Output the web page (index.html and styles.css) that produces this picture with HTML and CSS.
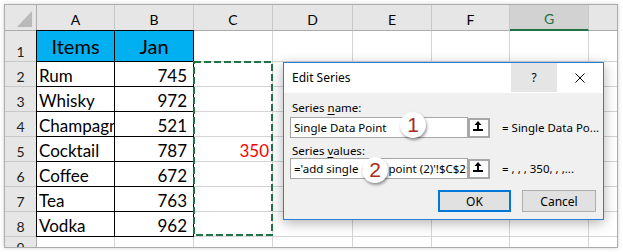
FILE: index.html
```html
<!DOCTYPE html>
<html lang="en">
<head>
    <meta charset="UTF-8">
    <title>Edit Series</title>
    <link rel="stylesheet" href="styles.css">
</head>
<body>
<div class="screen">
    <div class="frame">
        <div class="sheet">
            <!-- column headers -->
            <div class="hd corner"><svg width="31" height="25"><polygon points="27,6 27,22 12,22" fill="#b9b9b9"/></svg></div>
            <div class="hd col">A</div>
            <div class="hd col">B</div>
            <div class="hd col">C</div>
            <div class="hd col">D</div>
            <div class="hd col">E</div>
            <div class="hd col">F</div>
            <div class="hd col sel">G</div>
            <div class="hd col"></div>

            <div class="rn">1</div>
            <div class="top a">Items</div>
            <div class="top">Jan</div>
            <div></div><div></div><div></div><div></div><div></div><div></div>

            <div class="rn">2</div>
            <div class="b a">Rum</div>
            <div class="b n">745</div>
            <div></div><div></div><div></div><div></div><div></div><div></div>

            <div class="rn">3</div>
            <div class="b a">Whisky</div>
            <div class="b n">972</div>
            <div></div><div></div><div></div><div></div><div></div><div></div>

            <div class="rn">4</div>
            <div class="b a">Champagne</div>
            <div class="b n">521</div>
            <div></div><div></div><div></div><div></div><div></div><div></div>

            <div class="rn">5</div>
            <div class="b a">Cocktail</div>
            <div class="b n">787</div>
            <div class="red">350</div>
            <div></div><div></div><div></div><div></div><div></div>

            <div class="rn">6</div>
            <div class="b a">Coffee</div>
            <div class="b n">672</div>
            <div></div><div></div><div></div><div></div><div></div><div></div>

            <div class="rn">7</div>
            <div class="b a">Tea</div>
            <div class="b n">763</div>
            <div></div><div></div><div></div><div></div><div></div><div></div>

            <div class="rn">8</div>
            <div class="b a">Vodka</div>
            <div class="b n">962</div>
            <div></div><div></div><div></div><div></div><div></div><div></div>

            <div class="rn last">9</div>
            <div></div><div></div><div></div><div></div><div></div><div></div><div></div><div></div>
        </div>
    </div>

    <svg class="marquee" width="84" height="180"><rect x="2" y="2" width="78" height="173" fill="none" stroke="#217346" stroke-width="2" stroke-dasharray="7 3"/></svg>

    <div class="dialog">
        <div class="titlebar">
            <span class="title">Edit Series</span>
            <span class="tb-btn help">?</span>
            <span class="tb-btn"><svg width="10" height="10"><path d="M0.5 0.5 L9.5 9.5 M9.5 0.5 L0.5 9.5" stroke="#000" stroke-width="1"/></svg></span>
        </div>
        <div class="dlg-body">
            <div class="lbl">Series <u>n</u>ame:</div>
            <div class="field-row">
                <div class="field">Single Data Point</div>
                <div class="collapse"><svg width="18" height="16"><polygon points="8,1 4.5,5 11.5,5" fill="#000"/><rect x="7" y="5" width="2" height="4" fill="#000"/><rect x="3" y="9" width="10" height="2" fill="#000"/></svg></div>
                <div class="preview">= Single Data Po...</div>
            </div>
            <div class="lbl second">Series <u>v</u>alues:</div>
            <div class="field-row">
                <div class="field">='add single data point (2)'!$C$2:$C$8</div>
                <div class="collapse"><svg width="18" height="16"><polygon points="8,1 4.5,5 11.5,5" fill="#000"/><rect x="7" y="5" width="2" height="4" fill="#000"/><rect x="3" y="9" width="10" height="2" fill="#000"/></svg></div>
                <div class="preview">= , , , 350, , ,...</div>
            </div>
            <div class="btn-row">
                <div class="btn ok">OK</div>
                <div class="btn">Cancel</div>
            </div>
        </div>
        <span class="marker m1">1</span>
        <span class="marker m2">2</span>
    </div>
</div>
</body>
</html>
```

FILE: styles.css
```css
body {
    margin: 0;
    background: #fff;
}
.screen {
    position: relative;
    width: 623px;
    height: 252px;
    overflow: hidden;
}
.frame {
    margin: 4px;
    width: 612px;
    height: 242px;
    border: 1px solid #acacac;
    overflow: hidden;
    box-shadow: 0 0 4px rgba(0, 0, 0, 0.18);
}
.sheet {
    display: grid;
    grid-template-columns: 32px 78px 79px 79px 80px 79px 78px 79px 28px;
    grid-template-rows: 26px 31px repeat(7, 25px) 10px;
    font-family: Lato, "Open Sans", sans-serif;
}
.sheet > div {
    box-sizing: border-box;
    display: flex;
    align-items: flex-end;
    white-space: nowrap;
    overflow: hidden;
    border-right: 1px solid #d4d4d4;
    border-bottom: 1px solid #d4d4d4;
    padding: 0 2px 2px 2px;
    font-size: 17px;
    line-height: 1;
    color: #000;
}
.sheet > div:nth-child(9n) {
    border-right: none;
}
.sheet > div:nth-child(n+82) {
    border-bottom: none;
}
.hd {
    background: #e6e6e6;
    justify-content: center;
    color: #222;
}
.sheet > .hd {
    border-right-color: #c8c8c8;
    border-bottom-color: #ababab;
    font-size: 14px;
    padding-bottom: 3px;
}
.sheet > .corner {
    display: block;
    padding: 0;
    border-right-color: #ababab;
}
.sheet > .sel {
    background: #d2d2d2;
    color: #217346;
    border-bottom: 2px solid #217346;
}
.sheet > .rn {
    background: #e6e6e6;
    justify-content: center;
    color: #222;
    font-size: 14px;
    border-right-color: #ababab;
    border-bottom-color: #c8c8c8;
}
.sheet > .rn.last {
    align-items: flex-start;
    padding: 4px 2px 0;
}
.sheet > .top {
    background: #00b0f0;
    justify-content: center;
    font-size: 20px;
    padding-bottom: 5px;
    border-right-color: #000;
    border-bottom-color: #000;
    box-shadow: 0 -1px 0 #000;
}
.sheet > .top.a {
    box-shadow: -1px -1px 0 #000, 0 -1px 0 #000, -1px 0 0 #000;
}
.sheet > .b {
    border-right-color: #000;
    border-bottom-color: #000;
}
.sheet > .a {
    box-shadow: -1px 0 0 #000;
}
.sheet > .n {
    justify-content: flex-end;
    padding-right: 6px;
}
.sheet > .red {
    justify-content: flex-end;
    padding-right: 3px;
    color: #ff0000;
}
.marquee {
    position: absolute;
    left: 192px;
    top: 60px;
}

/* dialog */
.dialog {
    position: absolute;
    left: 283px;
    top: 62px;
    width: 321px;
    height: 158px;
    box-sizing: border-box;
    border: 1px solid #2a7fd4;
    background: #f0f0f0;
    box-shadow: 0 3px 12px rgba(0, 0, 0, 0.3);
    font-family: "Noto Sans", sans-serif;
    font-size: 11.5px;
    color: #000;
}
.titlebar {
    display: flex;
    height: 30px;
    background: #fff;
}
.title {
    flex: 1;
    padding-left: 8px;
    line-height: 30px;
    font-size: 12px;
}
.tb-btn {
    width: 46px;
    height: 29px;
    display: flex;
    align-items: center;
    justify-content: center;
    font-size: 12px;
}
.help {
    background: #e5e5e5;
}
.dlg-body {
    padding: 7px 7px 0 6px;
}
.lbl {
    line-height: 15px;
    padding-left: 2px;
    margin-bottom: 2px;
}
.lbl u {
    text-decoration-thickness: 1px;
    text-underline-offset: 2px;
}
.lbl.second {
    margin-top: 5px;
    margin-bottom: 0;
}
.field-row {
    display: flex;
    align-items: center;
    height: 21px;
}
.field {
    box-sizing: border-box;
    flex-shrink: 0;
    width: 178px;
    height: 21px;
    border: 1px solid #a6a6a6;
    background: #fff;
    padding-left: 3px;
    line-height: 19px;
    white-space: nowrap;
    overflow: hidden;
}
.collapse {
    box-sizing: border-box;
    flex-shrink: 0;
    width: 22px;
    height: 20px;
    border: 2px solid #a8a8a8;
    background: #fff;
    display: flex;
}
.preview {
    margin-left: 12px;
    white-space: nowrap;
}
.btn-row {
    display: flex;
    justify-content: flex-end;
    gap: 11px;
    margin-top: 11px;
}
.btn {
    box-sizing: border-box;
    width: 74px;
    height: 22px;
    border: 1px solid #adadad;
    background: #e1e1e1;
    display: flex;
    align-items: center;
    justify-content: center;
    font-size: 12px;
}
.btn.ok {
    width: 73px;
    border: 2px solid #0078d7;
}
.marker {
    position: absolute;
    width: 26px;
    height: 26px;
    border-radius: 50%;
    background: #fff;
    box-shadow: 1px 2px 3px rgba(0, 0, 0, 0.4);
    font-family: "Liberation Sans", Arial, sans-serif;
    font-size: 21px;
    line-height: 26px;
    text-align: center;
    color: #a72b20;
}
.m1 {
    left: 116px;
    top: 49px;
}
.m2 {
    left: 78px;
    top: 94px;
}
```
